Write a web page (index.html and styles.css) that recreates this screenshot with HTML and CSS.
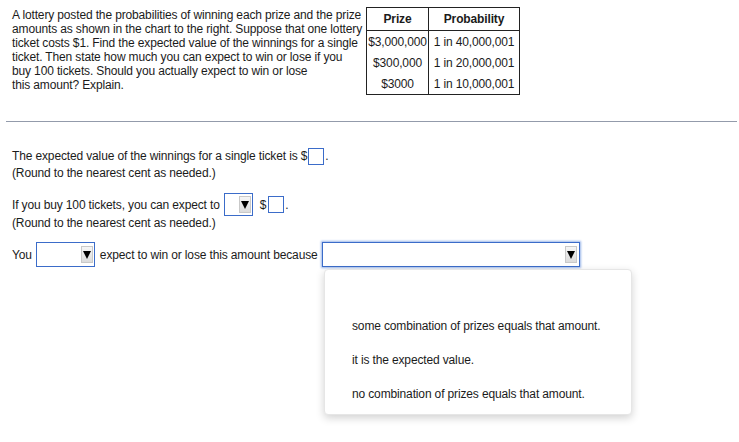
FILE: index.html
```html
<!DOCTYPE html>
<html>
<head>
<meta charset="utf-8">
<link rel="stylesheet" href="styles.css">
</head>
<body>
<div class="top">
  <div class="question">A lottery posted the probabilities of winning each prize and the prize<br>amounts as shown in the chart to the right. Suppose that one lottery<br>ticket costs $1. Find the expected value of the winnings for a single<br>ticket. Then state how much you can expect to win or lose if you<br>buy 100 tickets. Should you actually expect to win or lose<br>this amount? Explain.</div>
  <table class="prizes">
    <thead>
      <tr><th class="c1">Prize</th><th class="c2">Probability</th></tr>
    </thead>
    <tbody>
      <tr><td class="c1">$3,000,000</td><td class="c2">1 in 40,000,001</td></tr>
      <tr><td class="c1">$300,000</td><td class="c2">1 in 20,000,001</td></tr>
      <tr><td class="c1">$3000</td><td class="c2">1 in 10,000,001</td></tr>
    </tbody>
  </table>
</div>
<div class="rule"></div>
<div class="answers">
  <div class="line l1">The expected value of the winnings for a single ticket is $<span class="box"></span>.</div>
  <div class="line note n1">(Round to the nearest cent as needed.)</div>
  <div class="line l3">If you buy 100 tickets, you can expect to <span class="sel small"><span class="arrow"></span></span> $<span class="box b2"></span>.</div>
  <div class="line note n2">(Round to the nearest cent as needed.)</div>
  <div class="line l5">You <span class="sel mid"><span class="arrow"></span></span> expect to win or lose this amount because <span class="sel big"><span class="arrow"></span></span></div>
  <div class="menu">
    <div class="opt">some combination of prizes equals that amount.</div>
    <div class="opt">it is the expected value.</div>
    <div class="opt">no combination of prizes equals that amount.</div>
  </div>
</div>
</body>
</html>
```

FILE: styles.css
```css
html, body {
  margin: 0;
  padding: 0;
  background: #fff;
}
body {
  font-family: "Liberation Sans", Arial, sans-serif;
  font-size: 12px;
  line-height: 14px;
  letter-spacing: -0.14px;
  color: #1b1b1b;
  width: 739px;
  height: 442px;
  overflow: hidden;
  position: relative;
}
.top {
  display: flex;
  align-items: flex-start;
}
.question {
  width: 354px;
  padding: 8px 0 0 12px;
  line-height: 14px;
  white-space: nowrap;
}
.prizes {
  margin: 7px 0 0 0;
  border-collapse: collapse;
  border: 1px solid #222;
}
.prizes th, .prizes td {
  padding: 0;
  text-align: center;
  white-space: nowrap;
}
.prizes th {
  height: 22px;
  font-weight: bold;
  border-bottom: 1px solid #222;
}
.prizes td {
  height: 21px;
}
.prizes .c1 {
  width: 61px;
  border-right: 1px solid #222;
}
.prizes .c2 {
  width: 90px;
}
.rule {
  margin: 26px 2px 0 6px;
  height: 1px;
  background: #939bab;
}
.answers {
  padding-left: 12px;
}
.line {
  display: flex;
  align-items: center;
  white-space: nowrap;
}
.l1 {
  margin-top: 25px;
  height: 18px;
}
.n1 {
  height: 14px;
  margin-top: 1px;
}
.l3 {
  margin-top: 13px;
  height: 23px;
}
.n2 {
  height: 14px;
}
.l5 {
  margin-top: 12px;
  height: 25px;
}
.box {
  display: inline-block;
  width: 14px;
  height: 15px;
  border: 1px solid #3b6cc9;
  margin: 0 1px 0 1px;
  background: #fff;
}
.b2 {
  margin-left: 2px;
}
.sel {
  display: inline-flex;
  justify-content: flex-end;
  align-items: center;
  border: 1px solid #3b6cc9;
  background: #fff;
  box-sizing: border-box;
}
.small {
  width: 29px;
  height: 23px;
  margin: 0 7px 0 4px;
  padding-right: 1px;
}
.mid {
  width: 59px;
  height: 25px;
  margin: 0 5px 0 4px;
  padding-right: 1px;
}
.big {
  width: 258px;
  height: 25px;
  margin-left: 4px;
  padding-right: 2px;
  box-shadow: 0 0 2px 1px #9ab6ea;
}
.arrow {
  position: relative;
  display: inline-block;
  width: 12px;
  height: 17px;
  border: 1px solid #c9c9c9;
  background: linear-gradient(#f6f6f6, #dcdcdc);
  box-sizing: border-box;
}
.arrow::after {
  content: "";
  position: absolute;
  left: 1px;
  top: 4px;
  border-left: 4px solid transparent;
  border-right: 4px solid transparent;
  border-top: 8px solid #000;
}
.menu {
  position: absolute;
  left: 324px;
  top: 269px;
  width: 308px;
  height: 146px;
  box-sizing: border-box;
  background: #fff;
  border-radius: 4px;
  border: 1px solid #e6e6e6;
  box-shadow: 0 3px 8px rgba(0, 0, 0, 0.18);
  padding: 49px 0 0 27px;
}
.opt {
  height: 14px;
  margin-bottom: 20px;
  white-space: nowrap;
}
```
